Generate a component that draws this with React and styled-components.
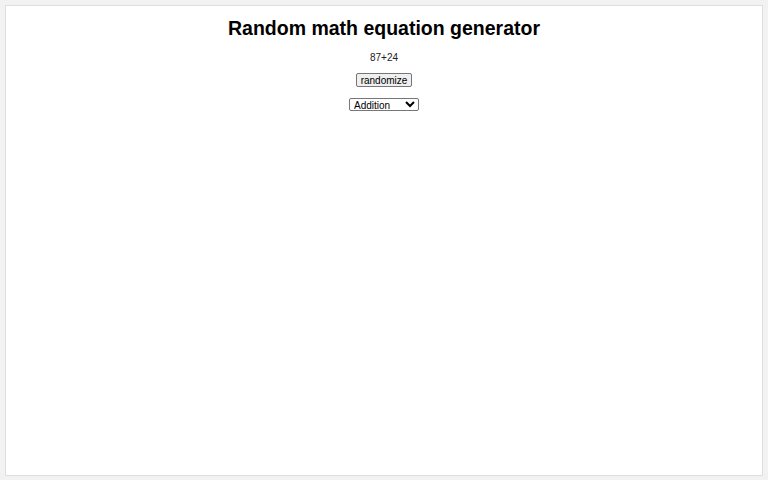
import { useState } from "react";
import styled, { createGlobalStyle } from "styled-components";

const Global = createGlobalStyle`
  html, body {
    margin: 0;
    background-color: #f2f2f2;
  }
  body {
    padding: 5px;
    font-family: "Liberation Sans", Arial, sans-serif;
  }
`;

const Card = styled.div`
  height: 471px;
  box-sizing: border-box;
  background-color: white;
  border: 1px solid #dedede;
  display: flex;
  flex-direction: column;
  align-items: center;
  padding-top: 11px;
`;
const Title = styled.h1`
  font-size: 19.5px;
  font-weight: bold;
  color: black;
  margin: 0 0 12px;
`;
const Equation = styled.div`
  font-size: 10px;
  color: #222;
  margin-bottom: 10px;
`;
const Button = styled.button`
  font-family: "Liberation Sans", Arial, sans-serif;
  font-size: 10px;
  height: 14px;
  padding: 0 4px;
  margin-bottom: 11px;
  background-color: #efefef;
  border: 1px solid #767676;
  border-radius: 2px;
  color: black;
`;
const Select = styled.select`
  font-family: "Liberation Sans", Arial, sans-serif;
  font-size: 10px;
  width: 70px;
  height: 13px;
  padding: 0;
  border: 1px solid #767676;
  border-radius: 2px;
  background: white;
`;

const ops = { Addition: "+", Subtraction: "-", Multiplication: "*", Division: "/" };

export default function App() {
  const [op, setOp] = useState("Addition");
  const [nums, setNums] = useState([87, 24]);

  const randomize = () =>
    setNums([Math.floor(Math.random() * 100), Math.floor(Math.random() * 100)]);

  return (
    <>
      <Global />
      <Card>
        <Title>Random math equation generator</Title>
        <Equation>
          {nums[0]}
          {ops[op]}
          {nums[1]}
        </Equation>
        <Button onClick={randomize}>randomize</Button>
        <Select value={op} onChange={(e) => setOp(e.target.value)}>
          {Object.keys(ops).map((k) => (
            <option key={k}>{k}</option>
          ))}
        </Select>
      </Card>
    </>
  );
}
